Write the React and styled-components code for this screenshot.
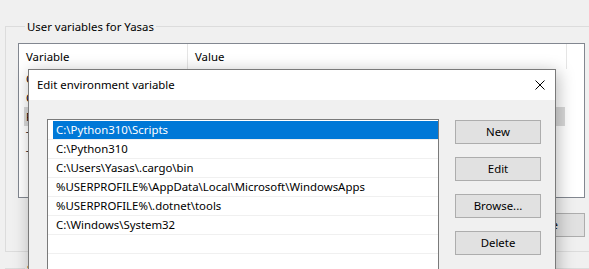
import React from "react";
import styled, { createGlobalStyle } from "styled-components";

const GlobalStyle = createGlobalStyle`
  html, body {
    margin: 0;
    padding: 0;
    background: #f0f0f0;
  }
  body {
    font-family: "Noto Sans", "Liberation Sans", sans-serif;
    font-size: 11.4px;
    color: #000;
  }
`;

const Desktop = styled.div`
  position: relative;
  width: 589px;
  height: 269px;
  overflow: hidden;
  background: #f0f0f0;
  padding-top: 26px;
  box-sizing: border-box;
`;

const GroupBox = styled.div`
  margin-left: 5px;
  width: 620px;
  border: 1px solid #dcdcdc;
  padding: 0 0 14px 12px;
  margin-bottom: ${(p) => p.$gap || 0}px;
`;

const Legend = styled.div`
  width: fit-content;
  margin: -8px 0 0 7px;
  padding: 0 2px;
  background: #f0f0f0;
  line-height: 15px;
  white-space: nowrap;
`;

const ListView = styled.div`
  margin-top: 9px;
  width: 567px;
  height: 155px;
  box-sizing: border-box;
  border: 1px solid #828790;
  background: #fff;
  overflow: hidden;
`;

const HeaderRow = styled.div`
  display: flex;
  height: 25px;
`;

const HeaderCell = styled.div`
  width: ${(p) => p.$w}px;
  box-sizing: border-box;
  border-right: 1px solid #e5e5e5;
  padding-left: 7px;
  line-height: 25px;
`;

const DataRow = styled.div`
  display: flex;
  height: 19px;
  width: 541px;
  margin-left: 5px;
  line-height: 19px;
  background: ${(p) => (p.$selected ? "#d9d9d9" : "transparent")};
`;

const DataCell = styled.div`
  width: ${(p) => p.$w}px;
  padding-left: 2px;
  box-sizing: border-box;
  white-space: nowrap;
  overflow: hidden;
  text-overflow: ellipsis;
`;

const ButtonRow = styled.div`
  display: flex;
  justify-content: flex-end;
  width: 567px;
  margin-top: 15px;
`;

const WinButton = styled.button`
  width: ${(p) => p.$w || 86}px;
  height: 24px;
  box-sizing: border-box;
  border: 1px solid #adadad;
  background: #e1e1e1;
  font-family: inherit;
  font-size: 11.4px;
  color: #000;
  padding: 0;
  line-height: 20px;
`;

const Dialog = styled.div`
  position: absolute;
  left: 28px;
  top: 69px;
  width: 528px;
  height: 240px;
  box-sizing: border-box;
  border: 1px solid #7a7a7a;
  background: #f0f0f0;
  box-shadow: 2px 3px 16px rgba(0, 0, 0, 0.28);
`;

const TitleBar = styled.div`
  display: flex;
  align-items: center;
  justify-content: space-between;
  height: 30px;
  background: #fff;
  padding: 0 10px 0 8px;
`;

const Title = styled.span`
  line-height: 30px;
`;

const CloseIcon = styled.svg`
  width: 10px;
  height: 10px;
  display: block;
`;

const DialogBody = styled.div`
  display: flex;
  align-items: flex-start;
  gap: 16px;
  padding: 19px 0 0 18px;
`;

const ListBox = styled.div`
  width: 392px;
  height: 200px;
  box-sizing: border-box;
  border: 1px solid #7a7a7a;
  background: #fff;
  padding-top: 1px;
`;

const ListItem = styled.div`
  height: 19px;
  box-sizing: border-box;
  border-bottom: 1px solid #f0f0f0;
  padding-left: 5px;
`;

const ItemText = styled.div`
  height: 18px;
  line-height: 18px;
  padding-left: 3px;
  white-space: nowrap;
  background: ${(p) => (p.$selected ? "#0078d7" : "transparent")};
  color: ${(p) => (p.$selected ? "#fff" : "#000")};
`;

const ButtonColumn = styled.div`
  display: flex;
  flex-direction: column;
  gap: 13px;
  padding-top: 1px;
`;

const userVars = [
  ["OneDrive", "C:\\Users\\Yasas\\OneDrive"],
  ["OneDriveConsumer", "C:\\Users\\Yasas\\OneDrive"],
  ["Path", "C:\\Python310\\Scripts\\;C:\\Python310\\;C:\\Users\\Yasas\\.cargo\\bin;%USERPROFILE%\\AppData\\Local\\Microsoft\\WindowsApps;"],
  ["TEMP", "%USERPROFILE%\\AppData\\Local\\Temp"],
  ["TMP", "%USERPROFILE%\\AppData\\Local\\Temp"],
];

const paths = [
  "C:\\Python310\\Scripts",
  "C:\\Python310",
  "C:\\Users\\Yasas\\.cargo\\bin",
  "%USERPROFILE%\\AppData\\Local\\Microsoft\\WindowsApps",
  "%USERPROFILE%\\.dotnet\\tools",
  "C:\\Windows\\System32",
  "",
  "",
  "",
];

export default function App() {
  return (
    <>
      <GlobalStyle />
      <Desktop>
        <GroupBox $gap={16}>
          <Legend>User variables for Yasas</Legend>
          <ListView>
            <HeaderRow>
              <HeaderCell $w={169}>Variable</HeaderCell>
              <HeaderCell $w={379}>Value</HeaderCell>
            </HeaderRow>
            {userVars.map(([name, value]) => (
              <DataRow key={name} $selected={name === "Path"}>
                <DataCell $w={164}>{name}</DataCell>
                <DataCell $w={364}>{value}</DataCell>
              </DataRow>
            ))}
          </ListView>
          <ButtonRow>
            <WinButton $w={89}>Delete</WinButton>
          </ButtonRow>
        </GroupBox>
        <GroupBox>
          <Legend>System variables</Legend>
        </GroupBox>

        <Dialog>
          <TitleBar>
            <Title>Edit environment variable</Title>
            <CloseIcon viewBox="0 0 10 10">
              <path d="M0.5 0.5 L9.5 9.5 M9.5 0.5 L0.5 9.5" stroke="#000" strokeWidth="1" fill="none" />
            </CloseIcon>
          </TitleBar>
          <DialogBody>
            <ListBox>
              {paths.map((p, i) => (
                <ListItem key={i}>
                  <ItemText $selected={i === 0}>{p}</ItemText>
                </ListItem>
              ))}
            </ListBox>
            <ButtonColumn>
              <WinButton>New</WinButton>
              <WinButton>Edit</WinButton>
              <WinButton>Browse...</WinButton>
              <WinButton>Delete</WinButton>
            </ButtonColumn>
          </DialogBody>
        </Dialog>
      </Desktop>
    </>
  );
}
